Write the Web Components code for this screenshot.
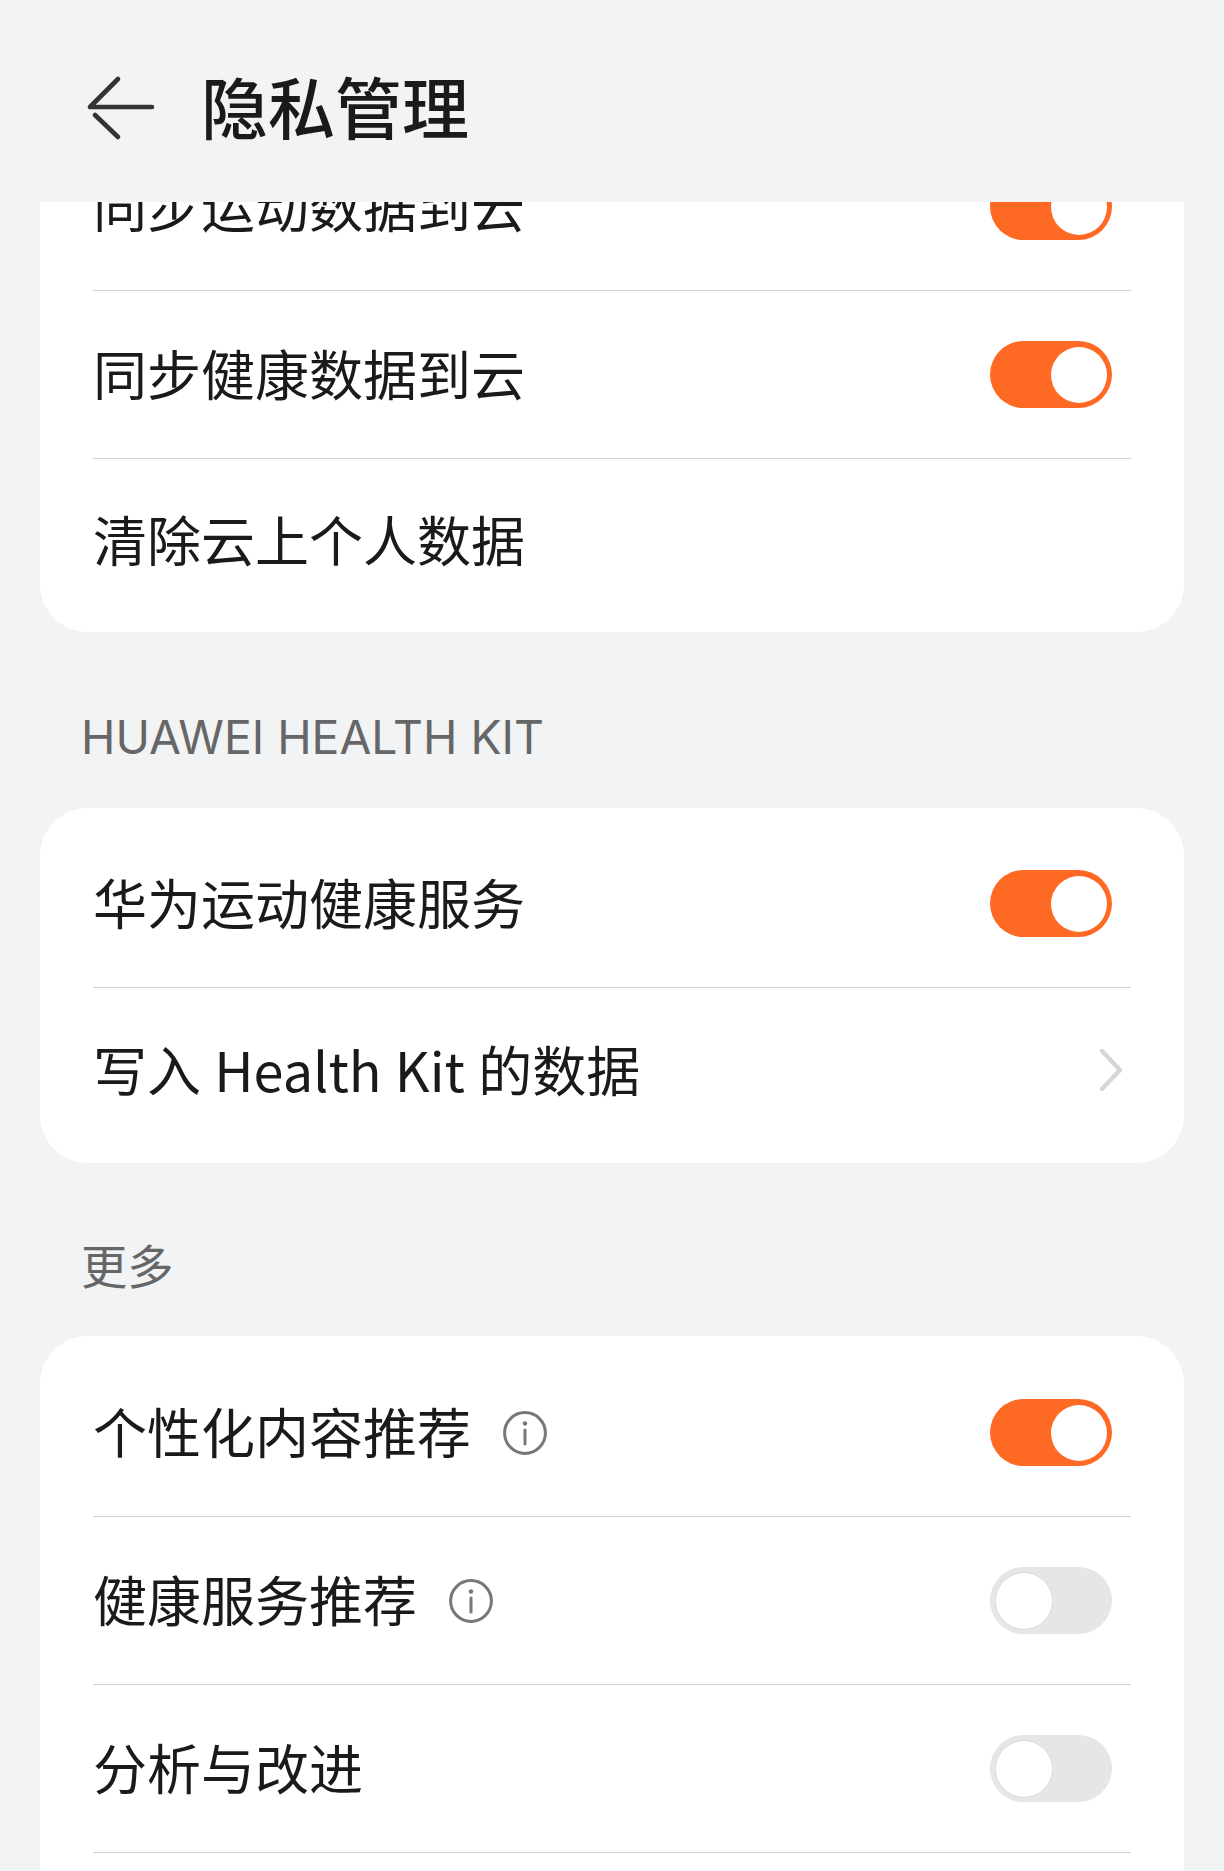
<!DOCTYPE html>
<html lang="zh-CN"><head><meta charset="utf-8"><title>隐私管理</title>
<style>
html,body{margin:0;padding:0;background:#f1f3f5}
body{font-family:"Noto Sans CJK SC","Noto Sans",sans-serif;color:#1a1a1a}
</style></head><body>
<privacy-page>
  <card-group style="margin-top:-91px;padding-bottom:11px">
    <setting-row toggle="on">同步运动数据到云</setting-row>
    <setting-row toggle="on">同步健康数据到云</setting-row>
    <setting-row last style="height:162px">清除云上个人数据</setting-row>
  </card-group>
  <section-label style="height:176px">HUAWEI HEALTH KIT</section-label>
  <card-group style="padding-bottom:11px">
    <setting-row toggle="on">华为运动健康服务</setting-row>
    <setting-row chevron last>写入 Health Kit 的数据</setting-row>
  </card-group>
  <section-label style="height:173px">更多</section-label>
  <card-group style="padding-top:13px;padding-bottom:120px">
    <setting-row toggle="on" info>个性化内容推荐</setting-row>
    <setting-row toggle="off" info>健康服务推荐</setting-row>
    <setting-row toggle="off">分析与改进</setting-row>
  </card-group>
</privacy-page>
<script>
function def(name, html, init){
  customElements.define(name, class extends HTMLElement{
    constructor(){super();const r=this.attachShadow({mode:"open"});r.innerHTML=html;}
    connectedCallback(){ if(init) init(this); }
  });
}
def("privacy-page",`<style>
:host{display:flex;flex-direction:column;height:1871px;width:1224px;overflow:hidden;background:#f1f3f5}
header{flex:none;height:202px;box-sizing:border-box;display:flex;align-items:center;padding:14px 0 0 86px;gap:43px}
h1{margin:-6px 0 0;font-size:67px;line-height:80px;font-weight:500;color:#1a1a1a;letter-spacing:0}
svg{flex:none;display:block}
main{flex:1;min-height:0;overflow:hidden;display:flex;flex-direction:column}
</style>
<header>
<svg width="72" height="66" viewBox="0 0 72 66" fill="none" stroke="#333" stroke-width="4.6" stroke-linecap="round" stroke-linejoin="round"><path d="M32 4 4 32H66"/><path d="M9 40 32 62"/></svg>
<h1>隐私管理</h1>
</header>
<main><slot></slot></main>`);
def("card-group",`<style>
:host{display:block;flex:none;margin:0 40px;background:#fff;border-radius:48px;padding:12px 53px 8px;box-sizing:border-box}
</style><slot></slot>`);
def("section-label",`<style>
:host{display:flex;flex:none;align-items:center;height:175px;box-sizing:border-box;padding:34px 0 0 81px;font-family:Inter,"Noto Sans CJK SC",sans-serif;font-size:46.3px;color:#666;line-height:60px}
</style><slot></slot>`);
def("info-icon",`<style>:host{display:block;flex:none;width:44px;height:44px}svg{display:block}</style>
<svg width="44" height="44" viewBox="0 0 44 44" fill="none" stroke="#777" stroke-width="3"><circle cx="22" cy="22" r="20.4"/><path d="M22 19V33" stroke-linecap="round"/><circle cx="22" cy="12.5" r="2.2" fill="#777" stroke="none"/></svg>`);
def("chevron-icon",`<style>:host{display:block;flex:none;width:24px;height:44px;margin-right:8px}svg{display:block}</style>
<svg width="24" height="44" viewBox="0 0 24 44" fill="none" stroke="#d6d6d6" stroke-width="4.4" stroke-linecap="round" stroke-linejoin="round"><path d="M3 3 21 22 3 41"/></svg>`);
def("toggle-switch",`<style>
:host{display:flex;flex:none;width:122px;height:67px;border-radius:34px;background:#fe6a24;box-sizing:border-box;padding:5.5px;justify-content:flex-end;margin-right:19px}
:host([state=off]){background:#e6e6e6;justify-content:flex-start}
i{display:block;width:56px;height:56px;border-radius:50%;background:#fff}
:host([state=off]) i{box-shadow:0 0 0 1px #ddd}
</style><i></i>`);
def("setting-row",`<style>
:host{display:flex;align-items:center;height:168px;box-sizing:border-box;border-bottom:1.5px solid #cfcfcf;font-size:54px;line-height:72px;color:#1a1a1a;gap:32px;word-spacing:1.2px}
:host([last]){border-bottom:none;height:164px}
.label{white-space:nowrap;flex:none;margin-top:-3px}
.sp{flex:1}
</style><span class="label"><slot></slot></span><span id="ext" style="display:contents"></span>`,
(el)=>{
  const ext=el.shadowRoot.getElementById("ext");
  if(ext.childElementCount) return;
  if(el.hasAttribute("info")) ext.appendChild(document.createElement("info-icon"));
  const sp=document.createElement("span");sp.className="sp";ext.appendChild(sp);
  if(el.hasAttribute("chevron")) ext.appendChild(document.createElement("chevron-icon"));
  if(el.hasAttribute("toggle")){const t=document.createElement("toggle-switch");t.setAttribute("state",el.getAttribute("toggle"));ext.appendChild(t);}
});
</script>
</body></html>
